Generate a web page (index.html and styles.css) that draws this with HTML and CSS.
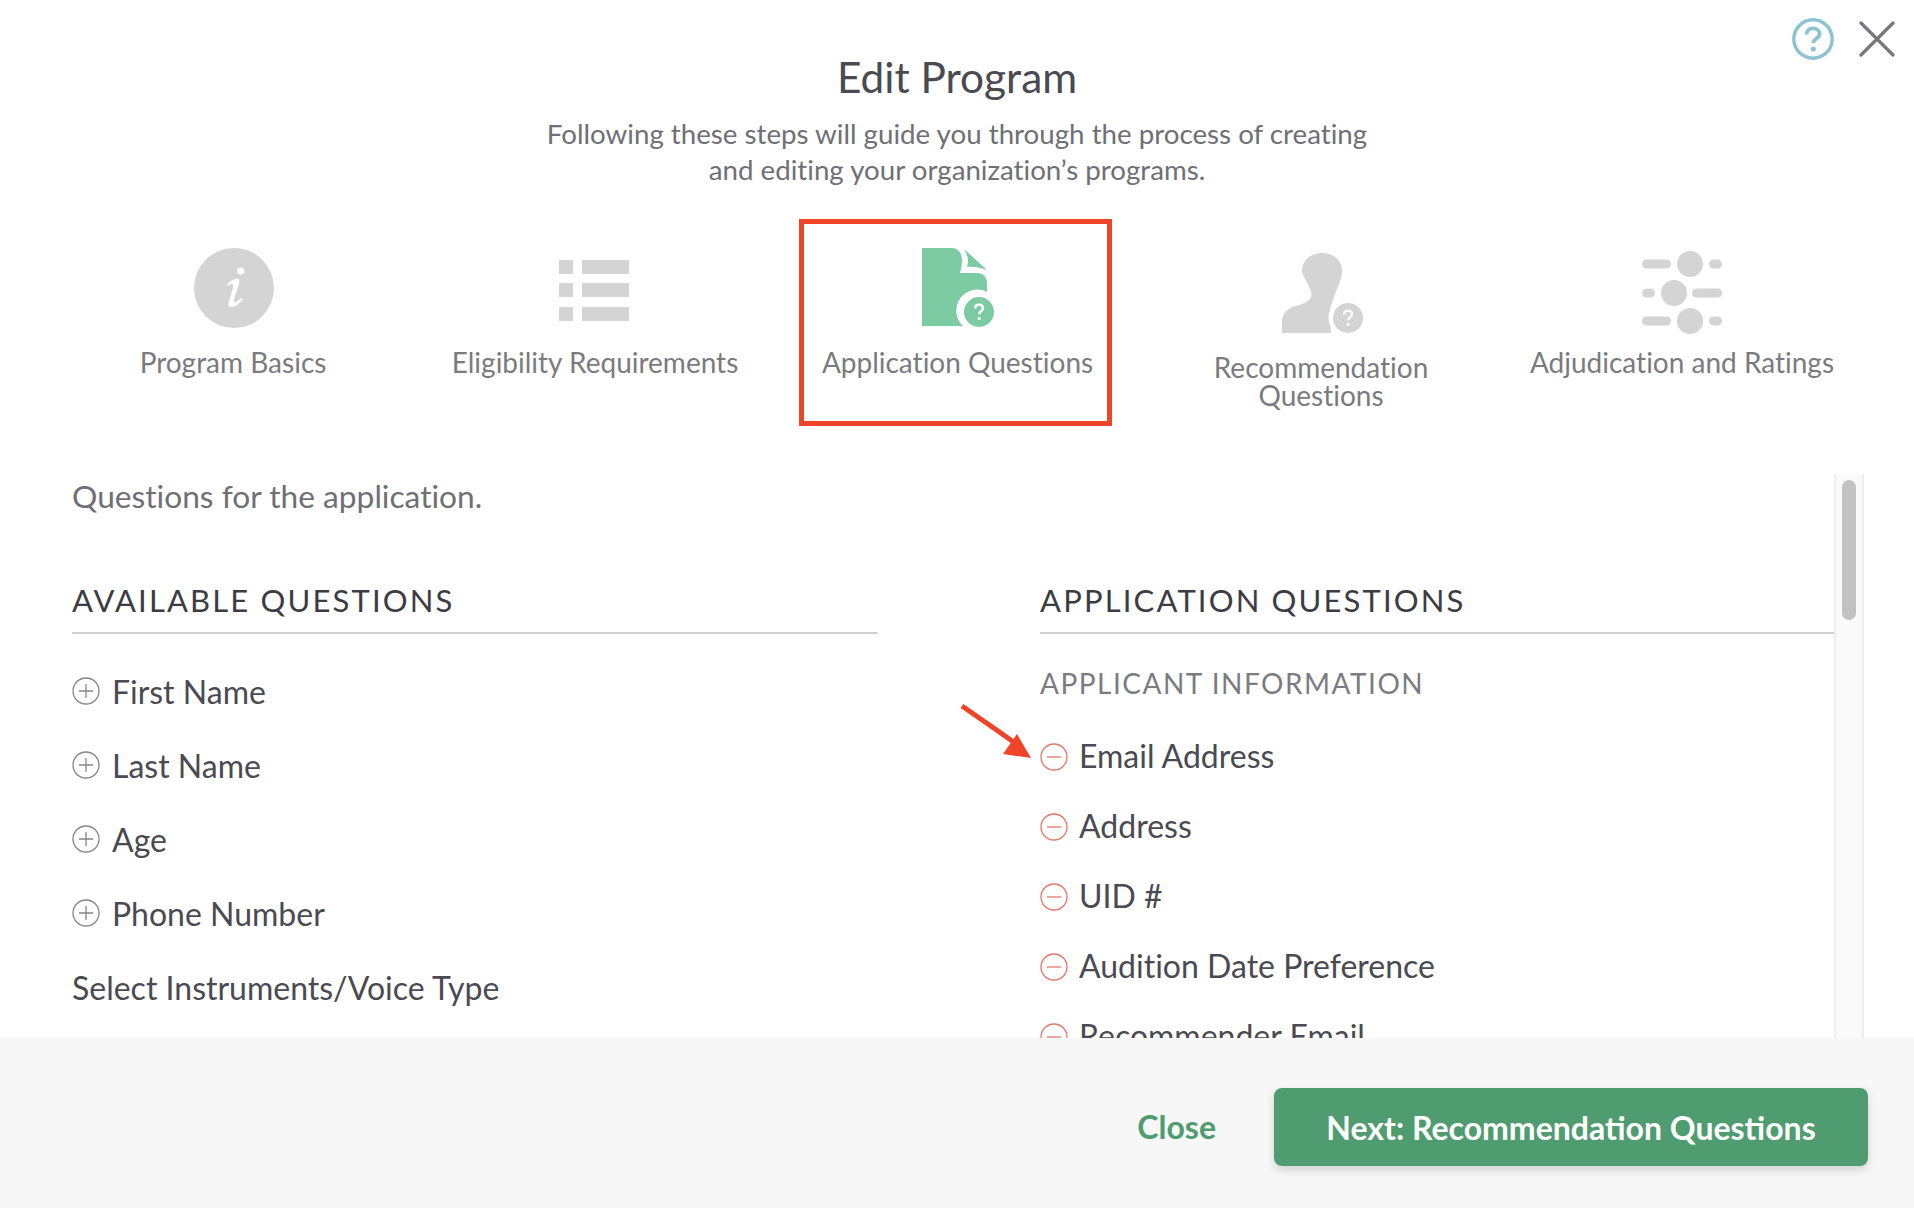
FILE: index.html
```html
<!DOCTYPE html>
<html lang="en">
<head>
<meta charset="utf-8">
<title>Edit Program</title>
<link rel="stylesheet" href="styles.css">
</head>
<body>
<div class="modal">
  <div class="top-actions">
    <svg class="help" viewBox="0 0 42 42"><circle cx="21" cy="21" r="19.200" fill="none" stroke="#8cc3d0" stroke-width="3.400"/><path d="M14.500 16.500c0-4 3-6.200 6.600-6.200s6.400 2.200 6.400 5.600c0 4.600-6.200 4.600-6.200 9.200" fill="none" stroke="#8cc3d0" stroke-width="3.800"/><circle cx="21.300" cy="31" r="2.600" fill="#8cc3d0"/></svg>
    <svg class="close-x" viewBox="0 0 36 36"><path d="M2 2l32 32M34 2L2 34" fill="none" stroke="#77777f" stroke-width="3.200" stroke-linecap="round"/></svg>
  </div>
  <header class="head">
    <h1 class="title">Edit Program</h1>
    <p class="sub">Following these steps will guide you through the process of creating<br>and editing your organization’s programs.</p>
  </header>
  <nav class="steps">
    <div class="step">
      <svg class="step-icon" viewBox="0 0 90 86"><circle cx="46" cy="40" r="40" fill="#d4d4d4"/><path fill="#fff" transform="translate(1 0)" d="M38 37C41 33 46 30 50 31C51 33 50 36 49 39L45 51C44 54 45 55 47 54C49 53 51 51 53 50L54 51C51 55 47 59 42 59C39 59 39 56 40 53L44 40C45 37 44 35 42 36L39 38Z"/><circle cx="52.700" cy="23" r="3.600" fill="#fff"/></svg>
      <div class="step-label">Program Basics</div>
    </div>
    <div class="step">
      <svg class="step-icon" viewBox="0 0 90 86"><g fill="#d4d4d4"><rect x="9" y="12" width="14" height="14"/><rect x="32" y="12" width="47" height="14"/><rect x="9" y="35" width="14" height="14"/><rect x="32" y="35" width="47" height="14"/><rect x="9" y="59" width="14" height="14"/><rect x="32" y="59" width="47" height="14"/></g></svg>
      <div class="step-label">Eligibility Requirements</div>
    </div>
    <div class="step">
      <svg class="step-icon" viewBox="0 0 90 86"><g transform="translate(9 0)"><path fill="#7ccba2" d="M0 0H30C36 0 40 5 40 12C40 17 39 21 38 25H55C61 25 65 29 65 35V44A21 21 0 0 0 41 78H0Z"/><path fill="#7ccba2" d="M42 1L65 22C60 20 52 18 45 19C47 13 46 7 42 1Z"/><circle cx="57" cy="64" r="15" fill="#7ccba2"/><path d="M53 60.500c0-2.500 1.800-3.800 4-3.800s4 1.300 4 3.500c0 2.800-3.800 3-3.800 6" fill="none" stroke="#fff" stroke-width="2.400"/><circle cx="57.200" cy="70.500" r="1.600" fill="#fff"/></g></svg>
      <div class="step-label">Application Questions</div>
      <div class="highlight"></div>
    </div>
    <div class="step">
      <svg class="step-icon" viewBox="0 0 90 86"><g transform="translate(6 5)"><path fill="#d4d4d4" d="M0 80V70C0 57 9 54 17 52C27 49 31 45 29 38C25 28 20 22 20 18C20 6 30 0 40 0C50 0 60 6 60 18C60 27 55 35 52 44L48 56L49 80Z"/><circle cx="66" cy="65" r="19.500" fill="#fff"/><circle cx="66" cy="65" r="15" fill="#d4d4d4"/><path d="M62 61.500c0-2.500 1.800-3.800 4-3.800s4 1.300 4 3.500c0 2.800-3.800 3-3.800 6" fill="none" stroke="#fff" stroke-width="2.200"/><circle cx="66.200" cy="71.500" r="1.500" fill="#fff"/></g></svg>
      <div class="step-label step-label-low">Recommendation<br>Questions</div>
    </div>
    <div class="step">
      <svg class="step-icon" viewBox="0 0 90 86"><g transform="translate(5 3)" fill="#d4d4d4"><rect x="0" y="8.500" width="29" height="9" rx="4.500"/><rect x="67" y="8.500" width="13" height="9" rx="4.500"/><circle cx="48" cy="13" r="13"/><rect x="0" y="37.500" width="13" height="9" rx="4.500"/><rect x="50" y="37.500" width="30" height="9" rx="4.500"/><circle cx="32" cy="42" r="13"/><rect x="0" y="65.500" width="29" height="9" rx="4.500"/><rect x="67" y="65.500" width="13" height="9" rx="4.500"/><circle cx="48" cy="70" r="13"/></g></svg>
      <div class="step-label">Adjudication and Ratings</div>
    </div>
  </nav>
  <main class="main">
    <div class="pane">
      <p class="intro">Questions for the application.</p>
      <div class="columns">
        <section class="col">
          <h2 class="col-title">AVAILABLE QUESTIONS</h2>
          <ul class="list list-avail">
            <li class="row"><svg class="row-icon" viewBox="0 0 28 28"><circle cx="14" cy="14" r="13" fill="none" stroke="#85858a" stroke-width="1.300"/><path d="M14 7v14M7 14h14" stroke="#85858a" stroke-width="1.300"/></svg>First Name</li>
            <li class="row"><svg class="row-icon" viewBox="0 0 28 28"><circle cx="14" cy="14" r="13" fill="none" stroke="#85858a" stroke-width="1.300"/><path d="M14 7v14M7 14h14" stroke="#85858a" stroke-width="1.300"/></svg>Last Name</li>
            <li class="row"><svg class="row-icon" viewBox="0 0 28 28"><circle cx="14" cy="14" r="13" fill="none" stroke="#85858a" stroke-width="1.300"/><path d="M14 7v14M7 14h14" stroke="#85858a" stroke-width="1.300"/></svg>Age</li>
            <li class="row"><svg class="row-icon" viewBox="0 0 28 28"><circle cx="14" cy="14" r="13" fill="none" stroke="#85858a" stroke-width="1.300"/><path d="M14 7v14M7 14h14" stroke="#85858a" stroke-width="1.300"/></svg>Phone Number</li>
            <li class="row">Select Instruments/Voice Type</li>
          </ul>
        </section>
        <section class="col col-right">
          <h2 class="col-title">APPLICATION QUESTIONS</h2>
          <h3 class="group-title">APPLICANT INFORMATION</h3>
          <svg class="arrow" viewBox="0 0 80 60"><path d="M2 2L58 41" stroke="#ee4427" stroke-width="5" fill="none"/><path d="M71 54L43 50L57 30Z" fill="#ee4427"/></svg>
          <ul class="list list-app">
            <li class="row"><svg class="row-icon" viewBox="0 0 28 28"><circle cx="14" cy="14" r="13" fill="none" stroke="#e57565" stroke-width="1.300"/><path d="M7 14h14" stroke="#e57565" stroke-width="1.300"/></svg>Email Address</li>
            <li class="row"><svg class="row-icon" viewBox="0 0 28 28"><circle cx="14" cy="14" r="13" fill="none" stroke="#e57565" stroke-width="1.300"/><path d="M7 14h14" stroke="#e57565" stroke-width="1.300"/></svg>Address</li>
            <li class="row"><svg class="row-icon" viewBox="0 0 28 28"><circle cx="14" cy="14" r="13" fill="none" stroke="#e57565" stroke-width="1.300"/><path d="M7 14h14" stroke="#e57565" stroke-width="1.300"/></svg>UID #</li>
            <li class="row"><svg class="row-icon" viewBox="0 0 28 28"><circle cx="14" cy="14" r="13" fill="none" stroke="#e57565" stroke-width="1.300"/><path d="M7 14h14" stroke="#e57565" stroke-width="1.300"/></svg>Audition Date Preference</li>
            <li class="row"><svg class="row-icon" viewBox="0 0 28 28"><circle cx="14" cy="14" r="13" fill="none" stroke="#e57565" stroke-width="1.300"/><path d="M7 14h14" stroke="#e57565" stroke-width="1.300"/></svg>Recommender Email</li>
          </ul>
        </section>
      </div>
    </div>
    <div class="track"><div class="thumb"></div></div>
  </main>
  <footer class="foot">
    <a class="close-link">Close</a>
    <button class="next">Next: Recommendation Questions</button>
  </footer>
</div>
</body>
</html>
```
FILE: styles.css
```css
* { box-sizing: border-box; }
html, body { margin: 0; height: 100%; }
body { font-family: Lato, "Liberation Sans", sans-serif; font-variant-ligatures: none; background: #fff; color: #4a4a52; overflow: hidden; }
.modal { position: relative; height: 1208px; display: flex; flex-direction: column; }
.top-actions { position: absolute; top: 18px; right: 19px; display: flex; align-items: flex-start; gap: 25px; }
.help { width: 42px; height: 42px; }
.close-x { width: 36px; height: 36px; margin-top: 3px; }
.head { padding-top: 50px; text-align: center; }
.title { margin: 0; font-size: 42.4px; line-height: 54px; font-weight: 400; color: #4a4a52; }
.sub { margin: 12px 0 0; font-size: 27.7px; line-height: 36px; color: #6f6f76; }
.steps { display: grid; grid-template-columns: 362px 362px 363px 364px 358px; padding: 0 52px; margin-top: 60px; height: 226px; flex: none; }
.step { position: relative; display: flex; flex-direction: column; align-items: center; text-align: center; }
.step-icon { width: 90px; height: 86px; flex: none; }
.step-label { margin-top: 13.5px; font-size: 28px; line-height: 28px; color: #7b7b7f; white-space: nowrap; }
.step-label-low { margin-top: 18.5px; }
.highlight { position: absolute; left: 23px; top: -29px; width: 313px; height: 207px; border: 5px solid #ee4427; }
.main { flex: 1; min-height: 0; display: flex; padding: 0 50px 0 72px; overflow: hidden; }
.pane { flex: 1; min-width: 0; padding-top: 2px; }
.intro { margin: 0; font-size: 31.7px; line-height: 40px; color: #6f6f76; }
.columns { display: flex; gap: 162px; margin-top: 64px; }
.col { width: 806px; flex: none; position: relative; }
.col-right { width: 794px; }
.col-title { margin: 0; padding-bottom: 12px; border-bottom: 2px solid #d0d0d0; font-size: 31px; line-height: 40px; font-weight: 400; letter-spacing: 2.15px; color: #3c3c44; }
.group-title { margin: 31px 0 0; font-size: 28px; line-height: 36px; font-weight: 400; letter-spacing: 1.5px; color: #7b7b82; }
.list { list-style: none; margin: 0; padding: 0; }
.list-avail { margin-top: 20px; }
.list-app { margin-top: 19px; }
.row { display: flex; align-items: center; font-size: 32px; color: #4a4a52; }
.list-avail .row { height: 74px; }
.list-app .row { height: 70px; }
.row-icon { width: 28px; height: 28px; margin-right: 12px; flex: none; }
.list-app .row-icon { margin-right: 11px; margin-top: 4px; }
.arrow { position: absolute; left: -80px; top: 124px; width: 80px; height: 60px; }
.track { width: 30px; flex: none; background: #fafafa; border-left: 2px solid #eee; border-right: 2px solid #eee; padding: 6px 6px 0; }
.thumb { width: 14px; height: 140px; border-radius: 8px; background: #c2c2c2; }
.foot { height: 170px; flex: none; background: #f7f7f7; display: flex; justify-content: flex-end; align-items: flex-start; padding: 50px 46px 0 0; gap: 58px; }
.close-link { font-size: 32px; line-height: 78px; font-weight: 700; color: #4f9c70; }
.next { width: 594px; height: 78px; border: 0; border-radius: 8px; background: #4f9c70; color: #fff; font-family: inherit; font-size: 32px; font-weight: 700; box-shadow: 0 4px 10px rgba(0,0,0,.15); }
```
